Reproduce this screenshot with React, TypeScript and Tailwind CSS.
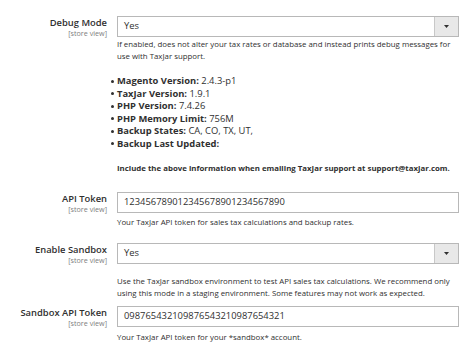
import React from "react";

const font = { fontFamily: '"Open Sans", "Liberation Sans", sans-serif' };

function Label({ title }: { title: string }) {
  return (
    <div className="flex flex-col items-end">
      <div className="text-[9.4px] leading-[13px] font-semibold text-[#303030] whitespace-nowrap">{title}</div>
      <div className="text-[7.2px] leading-[9px] text-[#808080] whitespace-nowrap">[store view]</div>
    </div>
  );
}

function Select({ value }: { value: string }) {
  return (
    <div className="flex h-[21px] border border-[#b8b8b8] bg-white">
      <div className="flex-1 flex items-center pl-[6px] text-[9.4px] text-[#303030]">{value}</div>
      <div className="w-[24px] flex items-center justify-center bg-[#e8e8e8] border-l border-[#c8c8c8]">
        <svg width="5" height="3" viewBox="0 0 5 3"><path d="M0 0h5L2.5 3z" fill="#303030" /></svg>
      </div>
    </div>
  );
}

function Input({ value }: { value: string }) {
  return (
    <div className="flex items-center h-[21px] border border-[#b8b8b8] bg-white pl-[6px] text-[9.4px] text-[#303030]">
      {value}
    </div>
  );
}

function Help({ children, className = "" }: { children: React.ReactNode; className?: string }) {
  return <div className={"text-[7.85px] leading-[12px] text-[#303030] " + className}>{children}</div>;
}

function Row({ title, children, className = "" }: { title: string; children: React.ReactNode; className?: string }) {
  return (
    <div className={"grid grid-cols-[107px_342px] gap-x-[10px] " + className}>
      <Label title={title} />
      <div>{children}</div>
    </div>
  );
}

const items: [string, string][] = [
  ["Magento Version:", "2.4.3-p1"],
  ["TaxJar Version:", "1.9.1"],
  ["PHP Version:", "7.4.26"],
  ["PHP Memory Limit:", "756M"],
  ["Backup States:", "CA, CO, TX, UT,"],
  ["Backup Last Updated:", ""],
];

export default function App() {
  return (
    <div className="w-[474px] h-[355px] bg-white overflow-hidden pt-[16px]" style={font}>
      <Row title="Debug Mode">
        <Select value="Yes" />
        <Help className="mt-[1px]">
          If enabled, does not alter your tax rates or database and instead prints debug messages for use with TaxJar support.
        </Help>
        <ul className="mt-[13px] text-[9.4px] leading-[12.5px] text-[#303030]">
          {items.map(([k, v]) => (
            <li key={k} className="flex items-center">
              <span className="w-0 relative">
                <span className="absolute left-[-6.5px] top-[-1.5px] w-[3px] h-[3px] rounded-full bg-[#303030]" />
              </span>
              <span className="font-bold">{k}</span>
              {v ? <span>&nbsp;{v}</span> : null}
            </li>
          ))}
        </ul>
        <div className="mt-[11.5px] text-[7.85px] leading-[12px] font-bold text-[#303030]">
          Include the above information when emailing TaxJar support at support@taxjar.com.
        </div>
      </Row>
      <Row title="API Token" className="mt-[18.5px]">
        <Input value="123456789012345678901234567890" />
        <Help className="mt-[3px]">Your TaxJar API token for sales tax calculations and backup rates.</Help>
      </Row>
      <Row title="Enable Sandbox" className="mt-[15px]">
        <Select value="Yes" />
        <Help className="mt-[11px]">
          Use the TaxJar sandbox environment to test API sales tax calculations. We recommend only using this mode in a staging environment. Some features may not work as expected.
        </Help>
      </Row>
      <Row title="Sandbox API Token" className="mt-[7px]">
        <Input value="098765432109876543210987654321" />
        <Help className="mt-[4px]">Your TaxJar API token for your *sandbox* account.</Help>
      </Row>
    </div>
  );
}
